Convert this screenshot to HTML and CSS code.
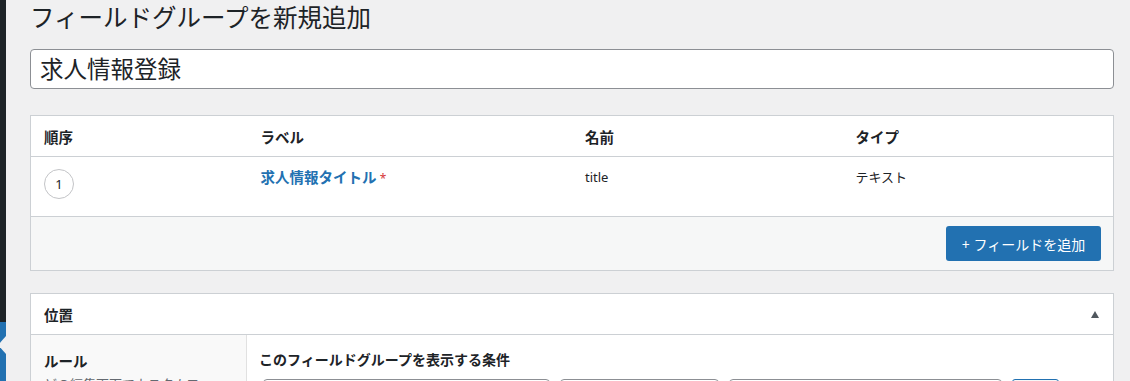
FILE: index.html
```html
<!DOCTYPE html>
<html lang="ja">
<head>
  <meta charset="UTF-8">
  <title>フィールドグループを新規追加</title>
  <link rel="stylesheet" href="styles.css">
</head>
<body>
  <div class="admin-menu">
    <div class="menu-current"><span class="menu-arrow"></span></div>
  </div>

  <div class="wrap">
    <h1 class="page-title">フィールドグループを新規追加</h1>
    <input type="text" class="title-input" value="求人情報登録">

    <div class="fields-box">
      <div class="fields-row fields-head">
        <div>順序</div>
        <div>ラベル</div>
        <div>名前</div>
        <div>タイプ</div>
      </div>
      <div class="fields-row field-item">
        <div><span class="order-badge">1</span></div>
        <div><a href="#" class="field-label">求人情報タイトル</a> <span class="required">*</span></div>
        <div>title</div>
        <div>テキスト</div>
      </div>
      <div class="fields-foot">
        <button type="button" class="btn-primary">+ フィールドを追加</button>
      </div>
    </div>

    <div class="postbox">
      <div class="postbox-head">
        <h2>位置</h2>
        <span class="toggle-arrow"></span>
      </div>
      <div class="postbox-body">
        <div class="rule-label">
          <h3>ルール</h3>
          <p>どの編集画面でカスタムフィールドを表示するかを決定するルールを作成します。</p>
        </div>
        <div class="rule-input">
          <h4>このフィールドグループを表示する条件</h4>
          <div class="rule-line">
            <select class="sel-param"><option>投稿タイプ</option></select>
            <select class="sel-op"><option>等しい</option></select>
            <select class="sel-value"><option>投稿</option></select>
            <button type="button" class="btn-and">and</button>
          </div>
        </div>
      </div>
    </div>
  </div>
</body>
</html>
```

FILE: styles.css
```css
/* ページ全体 */
html, body {
  height: 100%;
}
body {
  margin: 0;
  display: flex;
  overflow: hidden;
  background-color: #f0f0f1;
  color: #1d2327;
  font-family: "Noto Sans", "Noto Sans CJK JP", sans-serif;
  font-size: 13px;
}

/* 管理メニュー（左端だけ見える） */
.admin-menu {
  width: 6px;
  flex-shrink: 0;
  background-color: #1d2327;
  overflow: hidden;
}
.menu-current {
  margin-top: 322px;
  height: 80px;
  background-color: #2271b1;
  display: flex;
  justify-content: flex-end;
  padding-top: 14px;
  box-sizing: border-box;
}
.menu-current .menu-arrow {
  width: 0;
  height: 0;
  border-top: 9px solid transparent;
  border-bottom: 9px solid transparent;
  border-right: 8px solid #f0f0f1;
}

.wrap {
  flex: 1;
  padding: 0 16px 0 24px;
}

.page-title {
  margin: 2px 0 0;
  font-size: 24.5px;
  line-height: 32px;
  font-weight: 400;
}

.title-input {
  display: block;
  box-sizing: border-box;
  width: 100%;
  height: 40px;
  margin-top: 15px;
  padding: 0 9px 3px;
  border: 1px solid #8c8f94;
  border-radius: 4px;
  background: #fff;
  color: #1d2327;
  font-family: inherit;
  font-size: 23.5px;
}

/* フィールド一覧 */
.fields-box {
  margin-top: 26px;
  background: #fff;
  border: 1px solid #ccd0d4;
}
.fields-row {
  display: grid;
  grid-template-columns: 20% 30% 25% 25%;
}
.fields-row > div {
  padding-left: 13px;
}
.fields-head {
  height: 40px;
  align-items: center;
  border-bottom: 1px solid #ccd0d4;
  font-size: 14.5px;
  font-weight: 700;
}
.field-item {
  height: 60px;
  box-sizing: border-box;
  padding-top: 9px;
  border-bottom: 1px solid #ccd0d4;
  line-height: 22px;
}
.order-badge {
  display: flex;
  align-items: center;
  justify-content: center;
  width: 28px;
  height: 28px;
  margin-top: 3px;
  border: 1px solid #c3c4c7;
  border-radius: 50%;
  font-size: 13px;
  line-height: 1;
}
.field-label {
  color: #2271b1;
  font-weight: 700;
  font-size: 14.5px;
  text-decoration: none;
}
.required {
  color: #d63638;
  font-size: 12px;
}
.fields-foot {
  display: flex;
  justify-content: flex-end;
  padding: 9px 12px 9px;
  background: #f6f7f7;
}
.btn-primary {
  width: 155px;
  height: 35px;
  padding: 0;
  border: none;
  border-radius: 3px;
  background-color: #2271b1;
  color: #fff;
  font-family: inherit;
  font-size: 14px;
  cursor: pointer;
}

/* 位置 */
.postbox {
  margin-top: 22px;
  background: #fff;
  border: 1px solid #ccd0d4;
}
.postbox-head {
  display: flex;
  align-items: center;
  justify-content: space-between;
  height: 40px;
  padding: 0 14px 0 13px;
  border-bottom: 1px solid #ccd0d4;
}
.postbox-head h2 {
  margin: 0;
  font-size: 14.5px;
  font-weight: 700;
}
.toggle-arrow {
  width: 0;
  height: 0;
  border-left: 4px solid transparent;
  border-right: 4px solid transparent;
  border-bottom: 7px solid #50575e;
}
.postbox-body {
  display: grid;
  grid-template-columns: 216px 1fr;
}
.rule-label {
  padding: 15px 13px;
  background: #f9f9f9;
  border-right: 1px solid #e1e1e1;
}
.rule-label h3 {
  margin: 0;
  font-size: 14.5px;
  font-weight: 700;
  line-height: 22px;
}
.rule-label p {
  margin: 2px 0 0;
  color: #646970;
  font-size: 13px;
}
.rule-input {
  padding: 14px 12px;
}
.rule-input h4 {
  margin: 0;
  font-size: 14px;
  font-weight: 600;
  line-height: 22px;
}
.rule-line {
  display: flex;
  gap: 10px;
  margin: 8px 0 0 4px;
}
.rule-line select {
  height: 30px;
  border: 1px solid #8c8f94;
  border-radius: 4px;
  background: #fff;
  font-family: inherit;
}
.sel-param { width: 287px; }
.sel-op { width: 159px; }
.sel-value { width: 273px; }
.btn-and {
  width: 47px;
  height: 30px;
  border: 1px solid #2271b1;
  border-radius: 3px;
  background: #f6f7f7;
  color: #2271b1;
  font-family: inherit;
}
```
